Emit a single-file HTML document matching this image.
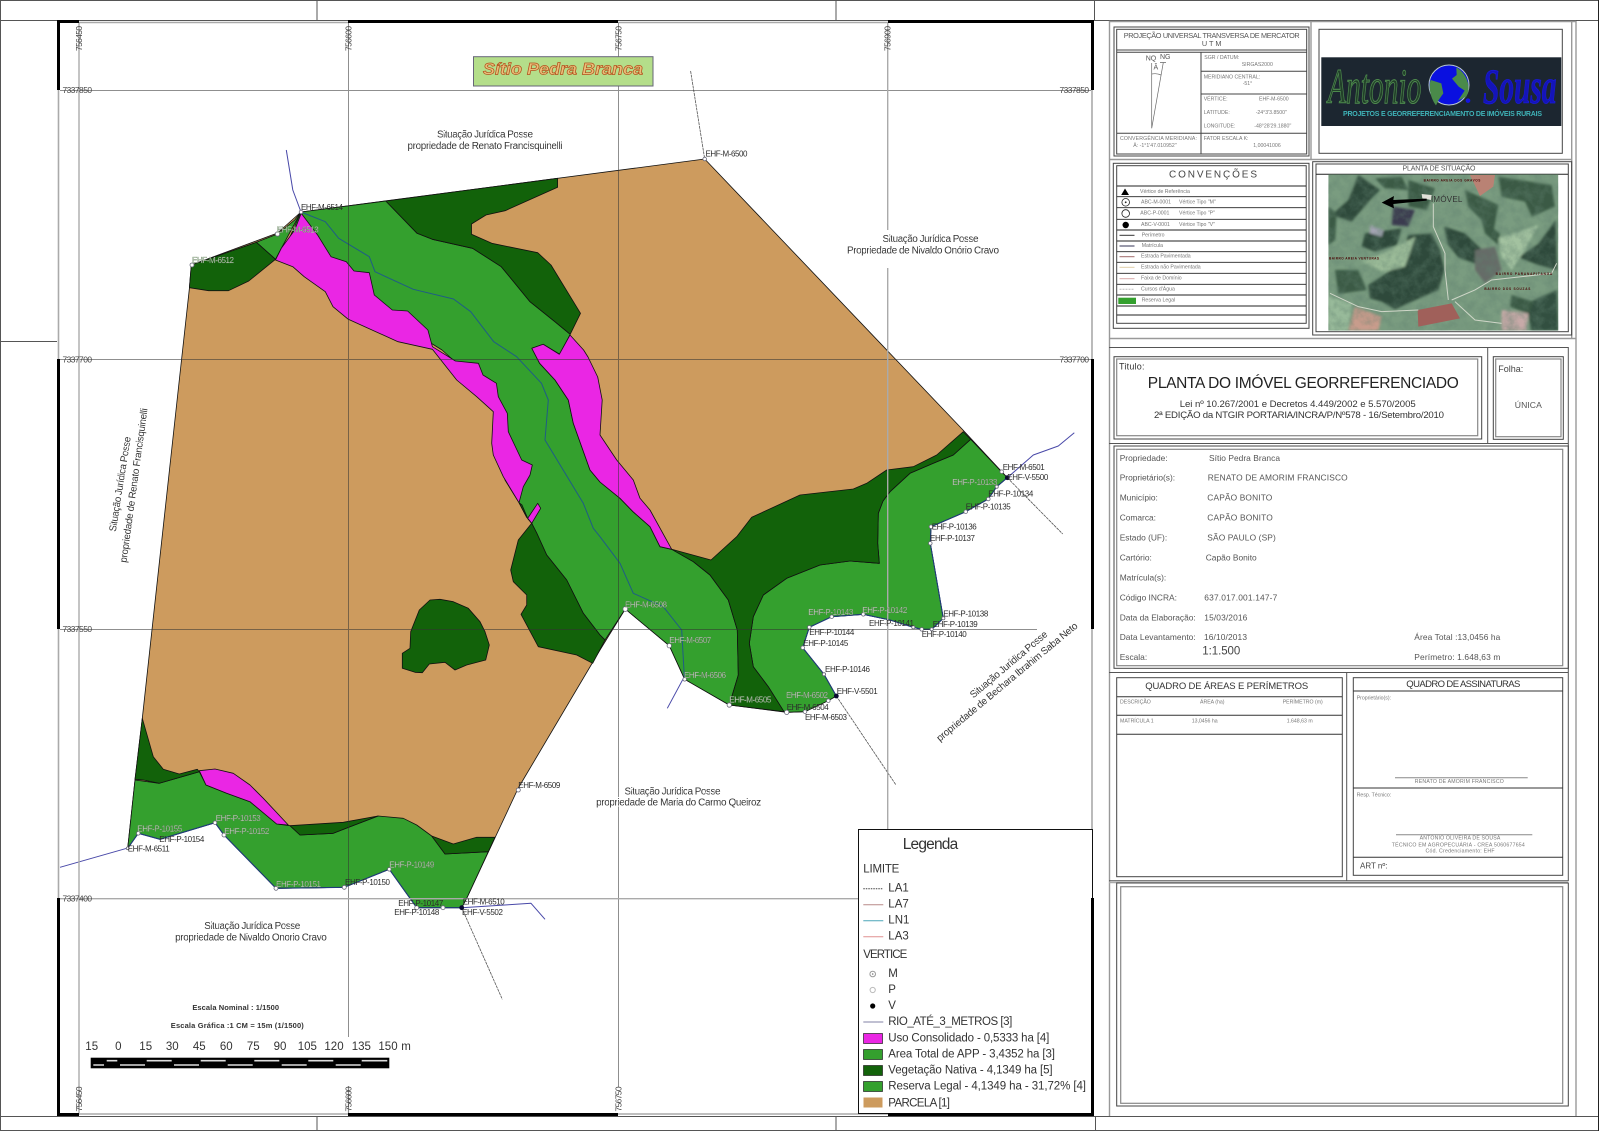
<!DOCTYPE html>
<html><head><meta charset="utf-8"><title>Planta do Imóvel</title>
<style>
html,body{margin:0;padding:0;background:#fff}
svg{display:block;filter:blur(.35px)}
text{font-family:"Liberation Sans",sans-serif;dominant-baseline:central;fill:#333}
.g{fill:#666}
.c{text-anchor:middle}
.m{font-size:10px;fill:#333;text-anchor:middle;paint-order:stroke;stroke:#fff;stroke-width:2px}
.d{font-size:8px;fill:#2c2c2c}
.l{font-size:8px;fill:#e6eee1;stroke:#5e7d59;stroke-width:.35px}
.k{font-size:8.4px;fill:#444}
.kv{font-size:8.4px;fill:#444;text-anchor:middle}
.t5{font-size:5.2px;fill:#777}
.t6{font-size:5.6px;fill:#777}
.t8{font-size:8.4px;fill:#555}
.lg{font-size:11.5px;fill:#333}
.s{font-size:11.5px;fill:#333;text-anchor:middle}
.b{fill:none;stroke:#444;stroke-width:1}
.b2{fill:none;stroke:#888;stroke-width:1.2}
.p{stroke:#111;stroke-width:.8;stroke-linejoin:round}
.v{fill:#fff;stroke:#667;stroke-width:.8}
</style></head><body>
<svg xmlns="http://www.w3.org/2000/svg" width="1600" height="1131" viewBox="0 0 1600 1131">
<defs><filter id="bl" x="0" y="0" width="1" height="1"><feGaussianBlur stdDeviation="4"/></filter>
<filter id="nz" x="0" y="0" width="1" height="1"><feTurbulence type="fractalNoise" baseFrequency=".035" numOctaves="4" seed="7"/><feColorMatrix values="0 0 0 0 .12  0 0 0 0 .22  0 0 0 0 .16  1.6 0 0 0 -.55"/></filter>
<clipPath id="ac"><rect x="10" y="13" width="690" height="469"/></clipPath></defs>
<rect width="1600" height="1131" fill="#fff"/>

<!-- page lines -->
<g fill="none" stroke="#555" stroke-width="1">
<path d="M0 .5H1599M0 20.5H1598M0 1116.5H1599M0 1130.5H1599M.5 0V1131M0 341.5H57M317 0V20M836 0V20M1094.5 0V20M317 1116V1130M836 1116V1130M1095.5 1116V1130"/>
<path d="M1598.5 0V1131" stroke="#222"/>
</g>

<!-- map -->
<polygon class="p" fill="#cd9b5e" points="301,212 704.7,159 963,430 1001.7,471.7 1007.3,477.7 996.7,486.7 988.3,499 965.7,511.7 931,526.7 930.3,543.3 942.7,615 943.3,618.3 931.7,629.3 921.7,629.3 913.3,627.3 890,620 863.3,614.3 831.7,616.7 809.3,627.3 802.7,647.7 824,674.3 836.3,696 828.3,700.7 805,711.7 786.7,712.3 729.3,705 684.7,679.3 669.3,645.7 625.3,609 600,650 518.3,788 466.7,898.3 461.7,907.7 416.7,907.7 389.3,869.3 344.3,887.3 276,888.3 224,835 215,822.7 160,839.3 138.3,833.3 127.7,848.3 135,780 142.3,718.3 179.3,380 189.4,288.3 191.3,265 277.5,233"/>

<!-- green band -->
<polygon class="p" fill="#34a02e" points="301,212 385.8,201 417.1,233.3 432.4,239.3 472.6,248.3 501.3,266.7 530,301.7 554.9,321.7 570.2,334.3 559.9,354.3 543.4,344.3 532,348.3 539.6,363.3 555,380 568.3,400 573.3,423.3 590,470 600,482 620,498.3 633,511.7 650,526.7 660,546.7 671.7,549.3 693.3,561.7 710,575 728.3,600 737.3,630 738.3,675 729.3,705 684.7,679.3 669.3,645.7 625.3,609 605,640 600,635 583.3,613.3 566.7,580 546.7,555 536.7,533 531.7,523.3 526.7,517.3 519,502.7 505,480 498,450 496,415 488,400 470,375 442,350 410,330 350,300 310,262 285,248"/>
<!-- green right -->
<polygon class="p" fill="#34a02e" points="970.7,439.3 1007.3,477.7 996.7,486.7 988.3,499 965.7,511.7 931,526.7 930.3,543.3 942.7,615 943.3,618.3 931.7,629.3 921.7,629.3 913.3,627.3 890,620 863.3,614.3 831.7,616.7 809.3,627.3 802.7,647.7 824,674.3 836.3,696 828.3,700.7 805,711.7 786.7,712.3 784,711.7 768.3,686.7 753.3,666.7 749.3,643.3 753.3,616.7 763.3,595 786.7,578.3 820,565 850,561 879.3,563.3 877.7,543.3 878.3,513.3 883,501 890,491.7 910,473.3 933.3,463.3 953.3,455"/>
<!-- green bottom -->
<polygon class="p" fill="#34a02e" points="135,780 159.3,783.3 199.3,771.7 206,785 226.7,793.3 250,801.7 276.7,824 290,825.7 300,835 333.3,833.3 350,826.7 378.3,816 403.3,818.3 416.7,825 431.7,836 445,854 488.3,851.7 466.7,898.3 461.7,907.7 416.7,907.7 389.3,869.3 344.3,887.3 276,888.3 224,835 215,822.7 160,839.3 138.3,833.3 127.7,848.3"/>
<polygon class="p" fill="#34a02e" points="256.4,242.3 277.5,234 294.7,220 301,212 281.3,248.3 275.5,259.3"/>

<!-- dark green -->
<g fill="#12620a">
<polygon class="p" points="191.3,265 256.4,242.3 275.5,259.3 248.8,281 228.5,290.7 208.6,290.7 189.4,287.7"/>
<polygon class="p" points="385.8,201 557.6,178.3 557.6,187.3 505.2,210.7 486,215 471.5,224 471.5,234.3 491.8,243.3 537.7,252.7 551,265 580.5,313.3 570.2,334.3 554.9,321.7 530,301.7 501.3,266.7 472.6,248.3 432.4,239.3 417.1,233.3"/>
<polygon class="p" points="671.7,549.3 711,560 736.7,536.7 751.7,517.3 800,495 853.3,489 866.7,483.3 886.7,470 913.3,466.7 936.7,455 963.3,431.7 970.7,439.3 953.3,455 933.3,463.3 910,473.3 890,491.7 883,501 878.3,513.3 877.7,543.3 879.3,563.3 850,561 820,565 786.7,578.3 763.3,595 753.3,616.7 749.3,643.3 753.3,666.7 768.3,686.7 784,711.7 729.3,705 738.3,675 737.3,630 728.3,600 710,575 693.3,561.7"/>
<polygon class="p" points="531.7,523.3 518.3,540 510.7,570 513.3,581.7 526.7,595 526.7,605 521,614.3 538.3,646.7 576.7,655 592.7,663.3 605,640 600,635 583.3,613.3 566.7,580 546.7,555 536.7,533"/>
<polygon class="p" points="519,502.7 526.7,517.3 531.7,523.3 528,519 522,505"/>
<polygon class="p" points="430,600 440,599.3 453.3,601.7 468.3,608.3 480,621.7 485,631.7 489.3,645 485.7,660 466.7,665 455,670 445,662.3 429.3,664 422.3,672.7 415,672.3 402.3,668.3 402.3,653.3 410,648.3 410.7,631.7 419.3,610"/>
<polygon class="p" points="142.3,718.3 153.3,756.7 163.3,769.3 179.3,774 197.3,769.3 199.3,771.7 159.3,783.3 143.3,780 135,779.3"/>
<polygon class="p" points="290,825.7 343.3,822.3 378,816 350,826.7 333.3,833.3 300,835"/>
<polygon class="p" points="431.7,836 453.3,844 476.7,837.3 495,837.3 488.3,851.7 445,854"/>
</g>

<!-- magenta -->
<g fill="#ea26e4">
<polygon class="p" points="301.2,213.3 317.6,235 331,256.7 346.3,261.7 354,271 369.3,272.7 374.3,295 392.3,310 407.6,311 427.9,330 432.4,346.7 455.4,361 478.4,363.3 483,375 496.4,383.3 498.3,396.7 507.3,413.3 508.3,431.7 521.7,460 532.3,465 530,475 523.3,486.7 519,502.7 503.3,476.7 493.3,455 491.7,443.3 493.3,411.7 476.7,396.7 456.7,380 432.4,349.3 398,341.7 348.3,319.3 333,306.7 325.3,291.7 304.2,276.7 292.8,266.7 275.5,260 281.3,248.3 294.7,230"/>
<polygon class="p" points="531.8,348.3 543.2,344.3 559.3,354.3 570,335 583.6,350 588,357 597.7,377 602.2,400 600,435 616.7,460 633.3,480 640,498.3 650,510 671.7,549.3 660,546.7 650,526.7 633,511.7 620,498.3 600,482 590,470 573.3,423.3 568.3,400 555,380 539.6,363.3"/>
<polygon class="p" points="527.7,518.3 537.7,503.3 540.7,508.3 531.7,523.3"/>
<polygon class="p" points="199.3,770.7 215,769 233.3,773.3 250,785 263.3,798.3 288.3,825 276.7,824 250,801.7 226.7,793.3 206,785"/>
</g>

<!-- boundary blue -->
<g fill="none" stroke="#1f3c7a" stroke-width="1.1" stroke-linejoin="round">
<path d="M1007.3 477.7L996.7 486.7 988.3 499 965.7 511.7 931 526.7 930.3 543.3 942.7 615 943.3 618.3 931.7 629.3 921.7 629.3 913.3 627.3 890 620 863.3 614.3 831.7 616.7 809.3 627.3 802.7 647.7 824 674.3 836.3 696"/>
<path d="M461.7 907.7L416.7 907.7 389.3 869.3 344.3 887.3 276 888.3 224 835 215 822.7 160 839.3 138.3 833.3 127.7 848.3"/>
</g>

<!-- rivers -->
<g fill="none" stroke-width="1" stroke-linejoin="round">
<path stroke="#1f5c86" d="M301 212L325.3 221.7 338.7 238.3 369.3 256.7 375 271.7 413.3 289.3 453.5 299 470.7 311.7 493.7 341.7 516.6 356.7 541.5 383.3 548.3 400 545 440 583.3 503.3 593.3 528.3 600 536.7 620 563.3 633.3 593.3 663.3 606.7 681.7 630 684.3 676.7"/>
<path stroke="#4848a8" d="M286.3 150L292.8 190 301 212M684.3 676.7L667.3 708.3M1074.3 432.7L1058.3 446 1033.3 455 1007.3 477.7M60 867.3L126.7 848.3M461.7 907.7L531 903.3 545 919.3"/>
<path stroke="#555" stroke-width=".8" stroke-dasharray="3 .7" d="M690.6 71L704.7 159M1007.3 477.7L1062.7 534M836.3 696L896 785M461.7 907.7L502.3 999.3"/>
</g>

<!-- grid -->
<g fill="none">
<path stroke="#333" stroke-opacity=".55" d="M60 90.5H1091M60 359.5H1091M60 629.5H1037M348.5 23V1037M618.5 23V1087"/>
<path stroke="#aaa" stroke-width="1.4" d="M79 23V1113M887.7 23V230M887.7 268V830M60 898.7H858"/>
<path stroke="#888" stroke-width="1.2" d="M348.5 1086V1113"/>
</g>

<!-- frame -->
<g fill="#000">
<rect x="57" y="20" width="3" height="70"/><rect x="57" y="359" width="3" height="270"/><rect x="57" y="898" width="3" height="218"/>
<rect x="1091" y="20" width="3" height="70"/><rect x="1091" y="359" width="3" height="270"/><rect x="1091" y="898" width="3" height="218"/>
<rect x="59" y="20" width="20" height="3"/><rect x="348" y="20" width="270" height="3"/><rect x="888" y="20" width="206" height="3"/>
<rect x="59" y="1113" width="20" height="3"/><rect x="348" y="1113" width="270" height="3"/><rect x="888" y="1113" width="206" height="3"/>
</g>
<g fill="none" stroke="#aaa" stroke-width="1.6">
<path d="M58.5 90V359M58.5 629V898M1092 90V359M1092 629V898M79 22.5H348M618 22.5H888M79 1114H348M618 1114H888"/>
</g>

<!-- vertices -->
<g>
<circle class="v" cx="301" cy="212" r="1.8"/><circle class="v" cx="277.5" cy="234" r="2.2"/><circle class="v" cx="192" cy="265" r="2"/><circle class="v" cx="704.7" cy="159" r="1.8"/>
<circle class="v" cx="1001.7" cy="471.7" r="1.8"/><circle class="v" cx="996.7" cy="486.7" r="1.6"/><circle class="v" cx="988.3" cy="499" r="1.8"/><circle class="v" cx="965.7" cy="511.7" r="1.8"/><circle class="v" cx="931" cy="526.7" r="1.8"/><circle class="v" cx="930.3" cy="543.3" r="1.8"/><circle class="v" cx="943.3" cy="618.3" r="1.6"/><circle class="v" cx="931.7" cy="629.3" r="1.6"/><circle class="v" cx="921.7" cy="629.3" r="1.8"/><circle class="v" cx="913.3" cy="627.3" r="1.6"/><circle class="v" cx="863.3" cy="614.3" r="1.8"/><circle class="v" cx="831.7" cy="616.7" r="1.8"/><circle class="v" cx="809.3" cy="627.3" r="1.8"/><circle class="v" cx="802.7" cy="647.7" r="1.8"/><circle class="v" cx="824" cy="674.3" r="1.6"/><circle class="v" cx="828.3" cy="700.7" r="1.8"/><circle class="v" cx="805" cy="711.7" r="1.8"/><circle class="v" cx="786.7" cy="712.3" r="2.2"/><circle class="v" cx="729.3" cy="705" r="2.2"/><circle class="v" cx="684.7" cy="679.3" r="1.8"/><circle class="v" cx="669.3" cy="645.7" r="2.2"/><circle class="v" cx="625.3" cy="609" r="2.4"/><circle class="v" cx="518.3" cy="790" r="2"/><circle class="v" cx="138.3" cy="833.3" r="1.8"/><circle class="v" cx="127.7" cy="848.3" r="1.4"/><circle class="v" cx="215" cy="822.7" r="1.8"/><circle class="v" cx="224" cy="835" r="2"/><circle class="v" cx="276" cy="888.3" r="2"/><circle class="v" cx="344.3" cy="887.3" r="2"/><circle class="v" cx="389.3" cy="869.3" r="1.8"/><circle class="v" cx="416.7" cy="907.7" r="2"/><circle class="v" cx="443" cy="907.7" r="2"/>
</g>
<circle cx="1007.3" cy="477.7" r="2.4" fill="#0a0a30"/><circle cx="836.3" cy="696" r="2.4" fill="#0a0a30"/><circle cx="461.7" cy="907.7" r="2.4" fill="#0a0a30"/>

<!-- title box -->
<rect x="473.5" y="56.7" width="179.5" height="29.3" fill="#b4de8a" stroke="#667" stroke-width="1"/>
<text x="483" y="69.7" textLength="160" lengthAdjust="spacingAndGlyphs" style="font-size:16.5px;font-weight:bold;font-style:italic;fill:#e9c07a;stroke:#b5501c;stroke-width:.7px">Sítio Pedra Branca</text>

<!-- situation labels -->
<text class="m" x="485" y="135" textLength="96">Situação Jurídica Posse</text>
<text class="m" x="485" y="146.7" textLength="155">propriedade de Renato Francisquinelli</text>
<text class="m" x="930.5" y="239.3" textLength="96">Situação Jurídica Posse</text>
<text class="m" x="923" y="251" textLength="152">Propriedade de Nivaldo Onório Cravo</text>
<text class="m" x="252.3" y="926.7" textLength="96">Situação Jurídica Posse</text>
<text class="m" x="251" y="938" textLength="151.7">propriedade de Nivaldo Onorio Cravo</text>
<text class="m" x="672.5" y="792" textLength="96">Situação Jurídica Posse</text>
<text class="m" x="678.6" y="803" textLength="165">propriedade de Maria do Carmo Queiroz</text>
<text class="m" transform="translate(120.8,484.2) rotate(-81)" textLength="96">Situação Jurídica Posse</text>
<text class="m" transform="translate(134.5,485.5) rotate(-82.2)" textLength="155.8">propriedade de Renato Francisquinelli</text>
<text class="m" transform="translate(1009.2,665) rotate(-40.2)" textLength="98">Situação Jurídica Posse</text>
<text class="m" transform="translate(1007.5,682.5) rotate(-39.7)" textLength="180">propriedade de Bechara Ibrahim Saba Neto</text>

<!-- coords -->
<g>
<text class="kv" transform="translate(79,38.5) rotate(-90)" textLength="25">756450</text>
<text class="kv" transform="translate(348.5,38.5) rotate(-90)" textLength="25">756600</text>
<text class="kv" transform="translate(618.5,38.5) rotate(-90)" textLength="25">756750</text>
<text class="kv" transform="translate(887.7,38.5) rotate(-90)" textLength="25">756900</text>
<text class="kv" transform="translate(79,1099) rotate(-90)" textLength="25">756450</text>
<text class="kv" transform="translate(348.5,1099) rotate(-90)" textLength="25">756600</text>
<text class="kv" transform="translate(618.5,1099) rotate(-90)" textLength="25">756750</text>
<text class="k" x="62.5" y="90" textLength="29.5">7337850</text>
<text class="k" x="62.5" y="359.5" textLength="29.5">7337700</text>
<text class="k" x="62.5" y="629" textLength="29.5">7337550</text>
<text class="k" x="62.5" y="898.7" textLength="29.5">7337400</text>
<text class="k" x="1059.5" y="90" textLength="29.5">7337850</text>
<text class="k" x="1059.5" y="359.5" textLength="29.5">7337700</text>
</g>

<!-- vertex labels -->
<text class="d" x="301" y="207.5" textLength="42">EHF-M-6514</text>
<text class="l" x="276.7" y="230" textLength="42">EHF-M-6513</text>
<text class="l" x="192" y="260.3" textLength="42">EHF-M-6512</text>
<text class="d" x="705.5" y="154" textLength="42">EHF-M-6500</text>
<text class="d" x="1002.7" y="467.3" textLength="42">EHF-M-6501</text>
<text class="d" x="1007.3" y="477.7" textLength="41">EHF-V-5500</text>
<text class="l" x="952.3" y="482.3" textLength="45">EHF-P-10133</text>
<text class="d" x="988.3" y="494" textLength="45">EHF-P-10134</text>
<text class="d" x="965.7" y="507" textLength="45">EHF-P-10135</text>
<text class="d" x="931.7" y="527" textLength="45">EHF-P-10136</text>
<text class="d" x="930" y="538.7" textLength="45">EHF-P-10137</text>
<text class="d" x="943.3" y="614" textLength="45">EHF-P-10138</text>
<text class="d" x="932.7" y="624.7" textLength="45">EHF-P-10139</text>
<text class="d" x="921.7" y="634.3" textLength="45">EHF-P-10140</text>
<text class="d" x="869" y="623.3" textLength="45">EHF-P-10141</text>
<text class="l" x="862.3" y="610.3" textLength="45">EHF-P-10142</text>
<text class="l" x="808.3" y="612.7" textLength="45">EHF-P-10143</text>
<text class="d" x="809.3" y="632.7" textLength="45">EHF-P-10144</text>
<text class="d" x="803.3" y="643.3" textLength="45">EHF-P-10145</text>
<text class="d" x="825" y="669.3" textLength="45">EHF-P-10146</text>
<text class="d" x="836.7" y="691.7" textLength="41">EHF-V-5501</text>
<text class="l" x="786" y="695.3" textLength="42">EHF-M-6502</text>
<text class="d" x="786.7" y="707.7" textLength="42">EHF-M-6504</text>
<text class="d" x="805" y="717.3" textLength="42">EHF-M-6503</text>
<text class="l" x="729.3" y="700" textLength="42">EHF-M-6505</text>
<text class="l" x="684" y="675.3" textLength="42">EHF-M-6506</text>
<text class="l" x="669.3" y="640.7" textLength="42">EHF-M-6507</text>
<text class="l" x="625" y="605" textLength="42">EHF-M-6508</text>
<text class="d" x="518.3" y="785.3" textLength="42">EHF-M-6509</text>
<text class="l" x="137.3" y="829" textLength="45">EHF-P-10155</text>
<text class="d" x="159.3" y="839.3" textLength="45">EHF-P-10154</text>
<text class="d" x="127.7" y="849" textLength="42">EHF-M-6511</text>
<text class="l" x="215.7" y="818.3" textLength="45">EHF-P-10153</text>
<text class="l" x="224.3" y="831.3" textLength="45">EHF-P-10152</text>
<text class="l" x="276" y="884.3" textLength="45">EHF-P-10151</text>
<text class="d" x="345" y="882.7" textLength="45">EHF-P-10150</text>
<text class="l" x="389.3" y="865" textLength="45">EHF-P-10149</text>
<text class="d" x="398.3" y="903.7" textLength="45">EHF-P-10147</text>
<text class="d" x="394.3" y="912.7" textLength="45">EHF-P-10148</text>
<text class="d" x="462.7" y="902" textLength="42">EHF-M-6510</text>
<text class="d" x="462" y="912.7" textLength="41">EHF-V-5502</text>

<!-- scale -->
<text x="235.7" y="1007.3" class="c" textLength="86.7" style="font-size:7.5px;font-weight:bold">Escala Nominal : 1/1500</text>
<text x="237.3" y="1025.7" class="c" textLength="133" style="font-size:7.5px;font-weight:bold">Escala Gráfica  :1 CM = 15m (1/1500)</text>
<text class="s" x="91.7" y="1047">15</text><text class="s" x="118.3" y="1047">0</text><text class="s" x="145.7" y="1047">15</text><text class="s" x="172.3" y="1047">30</text><text class="s" x="199.3" y="1047">45</text><text class="s" x="226.3" y="1047">60</text><text class="s" x="253.3" y="1047">75</text><text class="s" x="280" y="1047">90</text><text class="s" x="307.3" y="1047">105</text><text class="s" x="334" y="1047">120</text><text class="s" x="361.3" y="1047">135</text><text class="s" x="388" y="1047">150</text><text class="s" x="406" y="1047">m</text>
<rect x="90.7" y="1057.7" width="298.6" height="10.6" fill="#000"/>
<g stroke="#ddd" stroke-width="1.6">
<path d="M106.7 1060.7H117.3M146.7 1060.7H171.7M200.7 1060.7H225.7M254.3 1060.7H279.3M308.3 1060.7H333.3M361.7 1060.7H387.3"/>
<path d="M93.3 1065H104M120 1065H145M174 1065H199M227.7 1065H252.7M281.7 1065H306.7M335.7 1065H360.7"/>
</g>

<!-- legend -->
<rect x="858.5" y="829.5" width="234" height="284" fill="#fff" stroke="#111" stroke-width="1"/>
<rect x="888" y="1113" width="206" height="3" fill="#000"/><rect x="1091" y="898" width="3" height="218" fill="#000"/>
<text x="902.7" y="844.7" textLength="55.5" style="font-size:15.5px">Legenda</text>
<text class="lg" x="863.3" y="869.3" textLength="36">LIMITE</text>
<path d="M863.3 888.7H883.3" stroke="#444" stroke-dasharray="1.5 1"/>
<path d="M863.3 904.7H883.3" stroke="#b88a88"/>
<path d="M863.3 920.7H883.3" stroke="#4ba6b8"/>
<path d="M863.3 936.7H883.3" stroke="#e09090"/>
<text class="lg" x="888.3" y="888.7">LA1</text><text class="lg" x="888.3" y="904.7">LA7</text><text class="lg" x="888.3" y="920.7">LN1</text><text class="lg" x="888.3" y="936.7">LA3</text>
<text class="lg" x="863.3" y="955" textLength="44">VERTICE</text>
<circle cx="872.7" cy="974" r="2.8" fill="#fff" stroke="#999"/><circle cx="872.7" cy="974" r=".8" fill="#777"/>
<circle cx="872.7" cy="990" r="2.6" fill="#fff" stroke="#bbb"/>
<circle cx="872.7" cy="1006" r="2.6" fill="#000"/>
<text class="lg" x="888.3" y="974">M</text><text class="lg" x="888.3" y="990">P</text><text class="lg" x="888.3" y="1006">V</text>
<path d="M863.3 1022H883.3" stroke="#9a9ab8" stroke-width="1.2"/>
<text class="lg" x="888.3" y="1022" textLength="124">RIO_ATÉ_3_METROS [3]</text>
<rect x="863.5" y="1033.5" width="19" height="10" fill="#ea26e4" stroke="#222" stroke-width=".7"/>
<rect x="863.5" y="1049.5" width="19" height="10" fill="#34a02e" stroke="#222" stroke-width=".7"/>
<rect x="863.5" y="1065.5" width="19" height="10" fill="#12620a" stroke="#222" stroke-width=".7"/>
<rect x="863.5" y="1081.5" width="19" height="10" fill="#34a02e" stroke="#222" stroke-width=".7"/>
<rect x="863.5" y="1097.5" width="19" height="10" fill="#cd9b5e"/>
<text class="lg" x="888.3" y="1038.3" textLength="161">Uso Consolidado - 0,5333 ha [4]</text>
<text class="lg" x="888.3" y="1054.3" textLength="166.7">Area Total de APP - 3,4352 ha [3]</text>
<text class="lg" x="888.3" y="1070.7" textLength="164.3">Vegetação Nativa - 4,1349 ha [5]</text>
<text class="lg" x="888.3" y="1086.7" textLength="197.7">Reserva Legal - 4,1349 ha - 31,72% [4]</text>
<text class="lg" x="888.3" y="1103.3" textLength="61.7">PARCELA [1]</text>

<!-- right panel -->
<g fill="none" stroke="#999" stroke-width="1.4">
<path d="M1109.5 21V1116M1576 21V1116M1109 21.5H1576M1571.7 21V338M1109 159.5H1572M1109 338.5H1576M1311 21V160"/>
</g>
<g fill="none" stroke="#555" stroke-width="1">
<path d="M1109 347.5H1568.3V880.7H1109M1109 443.5H1568M1487.7 347.5V443M1109 672.5H1568M1346.7 672.5V880.7"/>
<path d="M1109 882.5H1568" stroke="#aaa" stroke-width="1.4"/>
</g>

<!-- UTM box -->
<rect class="b" x="1114" y="27" width="195" height="129"/>
<rect class="b" x="1116.7" y="29.3" width="190" height="124.7"/>
<path class="b" d="M1116.7 50H1306.7M1116.7 52.3H1306.7M1201 52.3V154M1201 71.3H1306.7M1201 94H1306.7M1116.7 133.3H1306.7"/>
<text class="c" x="1211.7" y="35.3" textLength="176" style="font-size:7.3px;fill:#555">PROJEÇÃO UNIVERSAL TRANSVERSA DE MERCATOR</text>
<text class="c" x="1211.7" y="43.3" style="font-size:7.3px;fill:#555">U T M</text>
<text x="1145.7" y="59" style="font-size:7px;fill:#555">NQ</text>
<text x="1160" y="57.7" style="font-size:7px;fill:#555">NG</text>
<text x="1153.5" y="68" style="font-size:7px;fill:#555">Â</text>
<path d="M1151.7 128.3V63M1151.7 128.3L1163.3 62.5M1151.7 74Q1157 73 1161 75M1160 62.5H1166" fill="none" stroke="#666" stroke-width=".7"/>
<text class="t5" x="1204.3" y="58">SGR / DATUM:</text><text class="t5" x="1241.7" y="65">SIRGAS2000</text>
<text class="t5" x="1203.7" y="77.3">MERIDIANO CENTRAL:</text><text class="t5" x="1242.7" y="84">-51°</text>
<text class="t5" x="1203.7" y="99.7">VÉRTICE:</text><text class="t5" x="1259" y="99.7">EHF-M-6500</text>
<text class="t5" x="1203.7" y="113">LATITUDE:</text><text class="t5" x="1255.7" y="113">-24°3'3.8500''</text>
<text class="t5" x="1203.7" y="126.7">LONGITUDE:</text><text class="t5" x="1254.3" y="126.7">-48°28'29.1880''</text>
<text class="t5" x="1120" y="139" textLength="77">CONVERGÊNCIA MERIDIANA:</text><text class="t5" x="1133.3" y="146">Â: -1°1'47.010952''</text>
<text class="t5" x="1203.7" y="139">FATOR ESCALA K:</text><text class="t5" x="1253.3" y="146">1,00041006</text>

<!-- logo -->
<rect class="b" x="1319" y="29.3" width="243.3" height="124"/>
<rect x="1321.3" y="57.3" width="240" height="68.7" fill="#1c2630"/>
<text transform="translate(1328,103) scale(.64,1)" textLength="146" lengthAdjust="spacingAndGlyphs" style="font-family:'Liberation Serif',serif;font-style:italic;font-size:50px;fill:#223f2a;stroke:#4d8a4d;stroke-width:1.1px;dominant-baseline:auto">Antonio</text>
<text transform="translate(1483,103) scale(.75,1)" textLength="98" lengthAdjust="spacingAndGlyphs" style="font-family:'Liberation Serif',serif;font-style:italic;font-weight:bold;font-size:50px;fill:#1414b8;stroke:#1a1ae0;stroke-width:.8px;dominant-baseline:auto">Sousa</text>
<g transform="translate(1318,50) scale(.3333)">
<circle cx="393" cy="105" r="60" fill="#0a10e0" stroke="#b8c8d0" stroke-width="3"/>
<path fill="#4a8a4a" d="M338 90L370 100 376 130 362 150 354 166C340 148 330 115 338 90Z"/>
<path fill="#4a8a4a" d="M415 52C445 68 462 110 445 140L420 152 440 122 422 110 402 86 416 75Z"/>
<circle cx="450" cy="152" r="7" fill="#1414e0"/>
</g>
<text x="1343" y="114.7" textLength="199" style="font-size:7px;fill:#3fb3b8;font-weight:bold">PROJETOS E GEORREFERENCIAMENTO DE IMÓVEIS RURAIS</text>

<!-- conventions -->
<rect class="b" x="1113.3" y="163.3" width="195.7" height="165"/>
<rect class="b" x="1116.7" y="165.7" width="189.5" height="157.6"/>
<path d="M1116.7 186H1306M1116.7 196.7H1306M1116.7 207.7H1306M1116.7 219.3H1306M1116.7 230H1306M1116.7 241H1306M1116.7 251.7H1306M1116.7 262.3H1306M1116.7 273.3H1306M1116.7 284.3H1306M1116.7 295H1306M1116.7 306H1306M1116.7 315H1306" stroke="#222" stroke-width=".9" fill="none"/>
<text class="c" x="1213" y="175" textLength="88" style="font-size:10px;fill:#444">C O N V E N Ç Õ E S</text>
<polygon points="1125,188.5 1121.2,195 1129,195" fill="#000"/>
<circle cx="1125.7" cy="202.3" r="3.8" fill="#fff" stroke="#222" stroke-width=".8"/><circle cx="1125.7" cy="202.3" r=".9" fill="#222"/>
<circle cx="1125.7" cy="213.5" r="3.8" fill="#fff" stroke="#222" stroke-width=".8"/>
<circle cx="1125.7" cy="225" r="3.2" fill="#000"/>
<path d="M1119.5 235.3H1134.5" stroke="#333"/><path d="M1119.5 246H1134.5" stroke="#335"/><path d="M1119.5 256.7H1134.5" stroke="#a06a6a"/><path d="M1119.5 267.3H1134.5" stroke="#e0cfa8"/><path d="M1119.5 278.7H1134.5" stroke="#d8a8a8"/><path d="M1119.5 289.3H1134.5" stroke="#bbb" stroke-dasharray="2 1"/>
<rect x="1118.3" y="297.7" width="17.7" height="6.3" fill="#34a02e"/>
<text class="t5" x="1140" y="192">Vértice de Referência</text>
<text class="t5" x="1141" y="202.3">ABC-M-0001</text><text class="t5" x="1179" y="202.3">Vértice Tipo "M"</text>
<text class="t5" x="1140.3" y="213.3">ABC-P-0001</text><text class="t5" x="1179" y="213.3">Vértice Tipo "P"</text>
<text class="t5" x="1141" y="225">ABC-V-0001</text><text class="t5" x="1179" y="225">Vértice Tipo "V"</text>
<text class="t5" x="1141.7" y="235.5">Perímetro</text><text class="t5" x="1141.7" y="246">Matrícula</text>
<text class="t5" x="1141" y="256.7">Estrada Pavimentada</text><text class="t5" x="1141" y="267.3">Estrada não Pavimentada</text>
<text class="t5" x="1141" y="278.7">Faixa de Domínio</text><text class="t5" x="1141" y="289.3">Cursos d'Água</text>
<text class="t5" x="1141.7" y="300.7">Reserva Legal</text>

<!-- situation plan -->
<rect class="b" x="1312.7" y="161.7" width="259" height="173.3" stroke="#888"/>
<rect class="b" x="1316" y="164" width="252.3" height="167.7"/>
<path d="M1316 174.2H1568" stroke="#222"/>
<text class="c" x="1439" y="169" textLength="73" style="font-size:7px;fill:#555">PLANTA DE SITUAÇÃO</text>
<g transform="translate(1325,170) scale(.3333)">
<g clip-path="url(#ac)">
<rect x="10" y="13" width="690" height="469" fill="#7a9c80"/>
<g filter="url(#bl)">
<polygon fill="#2e4a3a" points="130,345 200,300 235,240 250,195 320,190 345,240 358,300 340,360 260,395 210,418 170,395 135,385"/>
<polygon fill="#2e4a3a" points="358,170 420,190 472,240 462,285 400,262 368,222"/>
<polygon fill="#2e4a3a" points="580,262 640,222 692,150 696,300 640,285"/>
<polygon fill="#2e4a3a" points="100,15 165,60 135,90 80,155 20,135 70,90"/>
<polygon fill="#33503f" points="605,400 695,360 700,482 618,482"/>
<polygon fill="#3a5a45" points="420,60 520,105 505,190 470,150 430,110"/>
<polygon fill="#3a5a45" points="250,30 330,55 305,120 250,110"/>
<polygon fill="#3a5a45" points="520,20 680,45 690,110 620,140 600,95 530,80"/>
<polygon fill="#3a5a45" points="10,110 35,130 30,210 10,225"/>
<polygon fill="#3a5a45" points="30,300 100,300 125,360 40,372"/>
<polygon fill="#3a5a45" points="560,375 625,395 610,432 555,410"/>
<polygon fill="#3a5a45" points="150,25 230,20 250,60 180,55"/>
<polygon fill="#3a5a45" points="470,150 525,190 520,225 480,190"/>
<polygon fill="#2e4a3a" points="120,190 230,175 215,225 150,245 110,230"/>
<polygon fill="#3a3a50" points="205,110 270,120 250,170 200,165"/>
<polygon fill="#a3a4b2" points="135,165 175,180 170,200 135,190"/>
<polygon fill="#666c68" points="450,240 510,230 530,300 480,340 450,300"/>
<polygon fill="#a3c2a0" points="520,205 640,165 600,240 560,300 530,262"/>
<polygon fill="#9bbb98" points="205,235 272,200 240,290 175,305 110,275"/>
<polygon fill="#c7aaa8" points="530,420 610,430 605,482 530,482"/>
<polygon fill="#c89c8c" points="90,410 170,440 160,482 70,482"/>
<polygon fill="#98ba9a" points="10,380 80,400 70,482 10,482"/>
</g>
<rect x="10" y="13" width="690" height="469" filter="url(#nz)" opacity=".55"/>
<polygon fill="#b98274" points="435,15 510,15 505,50 465,78"/>
<polygon fill="#a0605a" points="278,420 380,400 405,445 280,470"/>
<polygon fill="#e0e0d8" points="290,72 320,75 318,90 292,85"/>
<path d="M325 100L325 170 360 250 360 300 370 390M15 370L100 410 170 425 280 420M380 390L450 360 500 330 680 310 695 280M390 395L450 450 530 460" fill="none" stroke="#cfd6c8" stroke-width="3"/>
</g>
<polygon points="170,98 207,78 205,90 305,86 305,92 205,102 207,115" fill="#000"/>
<text x="318" y="88" textLength="94" style="font-size:24px;fill:#333">IMÓVEL</text>
<text x="296" y="32" textLength="170" style="font-weight:bold;font-size:9.5px;fill:#4a0808">BAIRRO AREIA DOS GRAVOS</text>
<text x="12" y="265" textLength="150" style="font-weight:bold;font-size:9.5px;fill:#4a0808">BAIRRO AREIA VENTURAS</text>
<text x="512" y="312" textLength="170" style="font-weight:bold;font-size:9.5px;fill:#4a0808">BAIRRO PARANAPITANGA</text>
<text x="478" y="357" textLength="138" style="font-weight:bold;font-size:9.5px;fill:#4a0808">BAIRRO DOS SOUZAS</text>
</g>

<!-- title block -->
<rect class="b" x="1114" y="356.7" width="367.7" height="82.3"/>
<rect class="b2" x="1116.7" y="359" width="361" height="76.7"/>
<text x="1119" y="366.7" textLength="25.5" style="font-size:9px;fill:#333">Titulo:</text>
<text class="c" x="1303.3" y="383.3" textLength="311" style="font-size:15.5px;fill:#222">PLANTA DO IMÓVEL GEORREFERENCIADO</text>
<text class="c" x="1297.7" y="404.3" textLength="236" style="font-size:9.6px;fill:#333">Lei nº 10.267/2001 e Decretos 4.449/2002 e 5.570/2005</text>
<text class="c" x="1299" y="415.7" textLength="290" style="font-size:9.6px;fill:#333">2ª EDIÇÃO da NTGIR PORTARIA/INCRA/P/Nº578 - 16/Setembro/2010</text>
<rect class="b" x="1493.3" y="356.7" width="70" height="82.6"/>
<rect class="b2" x="1495.7" y="359" width="65.3" height="77.7"/>
<text x="1498.3" y="369" textLength="25" style="font-size:9px;fill:#444">Folha:</text>
<text class="c" x="1528.3" y="405" textLength="27" style="font-size:8.6px;fill:#555">ÚNICA</text>

<!-- property -->
<rect class="b" x="1114" y="446" width="454.3" height="222.3"/>
<rect class="b2" x="1116.7" y="449.3" width="446" height="216.4"/>
<text class="t8" x="1119.7" y="458">Propriedade:</text><text class="t8" x="1209" y="458" textLength="71">Sítio Pedra Branca</text>
<text class="t8" x="1119.7" y="477.7">Proprietário(s):</text><text class="t8" x="1207.7" y="477.7" textLength="140">RENATO DE AMORIM FRANCISCO</text>
<text class="t8" x="1119.7" y="497.7">Município:</text><text class="t8" x="1207.3" y="497.7" textLength="65">CAPÃO BONITO</text>
<text class="t8" x="1119.7" y="517.7">Comarca:</text><text class="t8" x="1207.3" y="517.7" textLength="65.5">CAPÃO BONITO</text>
<text class="t8" x="1119.7" y="537.7">Estado (UF):</text><text class="t8" x="1207.3" y="537.7" textLength="68.5">SÃO PAULO (SP)</text>
<text class="t8" x="1119.7" y="557.3">Cartório:</text><text class="t8" x="1205.7" y="557.3" textLength="51">Capão Bonito</text>
<text class="t8" x="1119.7" y="577.3">Matrícula(s):</text>
<text class="t8" x="1119.7" y="597.3">Código  INCRA:</text><text class="t8" x="1204.3" y="597.3" textLength="73">637.017.001.147-7</text>
<text class="t8" x="1119.7" y="617.3" textLength="76">Data da Elaboração:</text><text class="t8" x="1204.3" y="617.3" textLength="43">15/03/2016</text>
<text class="t8" x="1119.7" y="637" textLength="76">Data Levantamento:</text><text class="t8" x="1204" y="637" textLength="43">16/10/2013</text>
<text class="t8" x="1119.7" y="657">Escala:</text><text x="1202.3" y="651.7" textLength="38" style="font-size:11.5px;fill:#444">1:1.500</text>
<text class="t8" x="1414.3" y="637" textLength="86">Área Total :13,0456 ha</text>
<text class="t8" x="1414.3" y="657" textLength="86">Perímetro: 1.648,63 m</text>

<!-- areas -->
<rect class="b" x="1116.7" y="677.7" width="225.6" height="199"/>
<path d="M1116.7 696.7H1342M1116.7 715.3H1342M1116.7 734.3H1342" stroke="#333" fill="none"/>
<text class="c" x="1226.7" y="686.7" textLength="163" style="font-size:9.5px;fill:#333">QUADRO DE ÁREAS E PERÍMETROS</text>
<text class="t5" x="1120" y="702.7">DESCRIÇÃO</text><text class="t5" x="1200" y="702.7">ÁREA (ha)</text><text class="t5" x="1282.7" y="702.7">PERÍMETRO (m)</text>
<text class="t5" x="1120" y="721.7">MATRÍCULA 1</text><text class="t5" x="1191.7" y="721.7">13,0456 ha</text><text class="t5" x="1286.7" y="721.7">1.648,63 m</text>

<!-- signatures -->
<rect class="b" x="1353.3" y="677.7" width="209.4" height="197.6"/>
<path d="M1353.3 691H1562.7M1353.3 788H1562.7M1353.3 857.3H1562.7" stroke="#333" fill="none"/>
<path d="M1395 777.7H1527.7M1396 834.7H1532.3" stroke="#888" fill="none"/>
<text class="c" x="1463.3" y="684.3" textLength="114" style="font-size:9.5px;fill:#333">QUADRO DE ASSINATURAS</text>
<text class="t5" x="1356.7" y="698.3">Proprietário(s):</text>
<text class="t5 c" x="1459.3" y="782" textLength="89">RENATO DE AMORIM FRANCISCO</text>
<text class="t5" x="1356.7" y="795.7">Resp. Técnico:</text>
<text class="t5 c" x="1460" y="838.3" textLength="80.7">ANTONIO OLIVEIRA DE SOUSA</text>
<text class="t5 c" x="1458.3" y="845.7" textLength="133">TÉCNICO EM AGROPECUÁRIA - CREA 5060677654</text>
<text class="t5 c" x="1460" y="851.7" textLength="69">Cód. Credenciamento: EHF</text>
<text x="1360" y="866" style="font-size:8px;fill:#444">ART nº:</text>

<!-- bottom box -->
<rect class="b" x="1116.7" y="883" width="451.6" height="223"/>
<rect class="b2" x="1120.7" y="886.7" width="442" height="216.6"/>
</svg>
</body></html>
